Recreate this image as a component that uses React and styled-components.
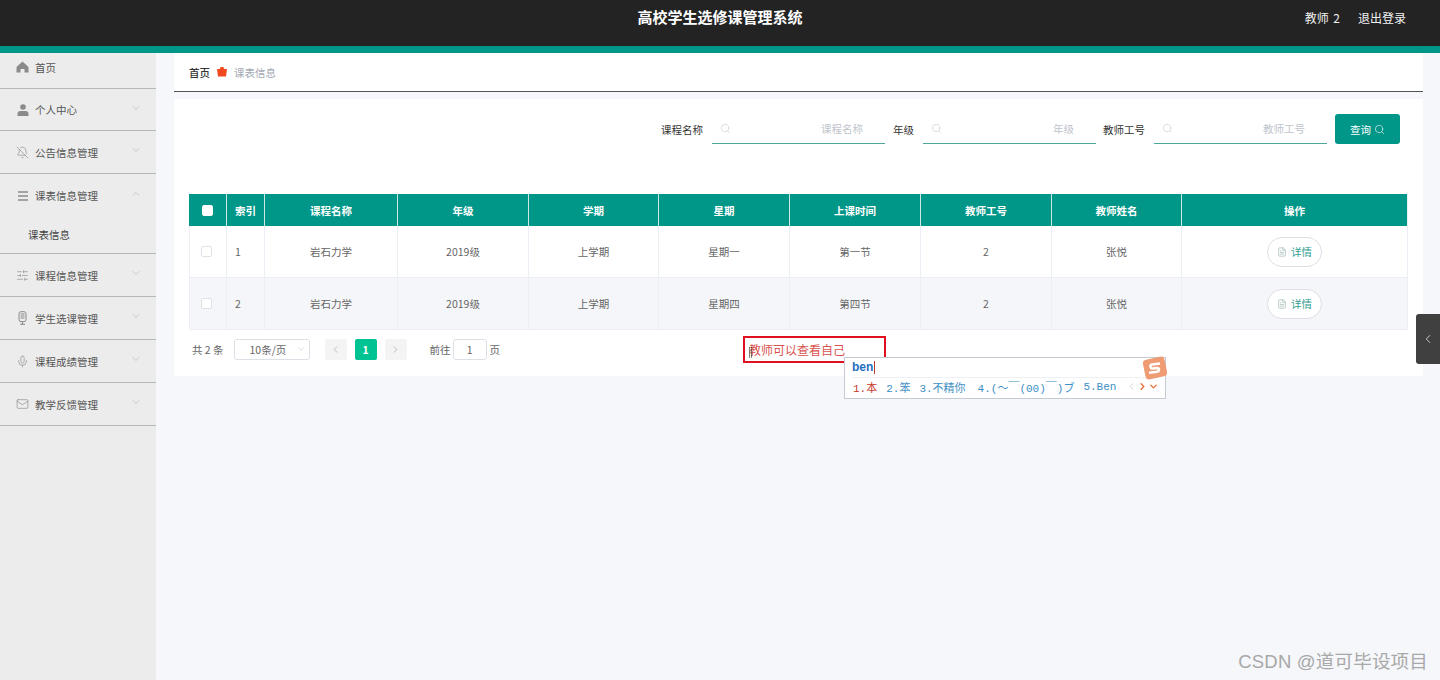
import React from "react";
import styled, { createGlobalStyle } from "styled-components";
import { ChevronDown, ChevronUp, ChevronLeft, ChevronRight, Search, BellOff, SlidersHorizontal, Mic, Mail, FileText } from "lucide-react";

const Global = createGlobalStyle`
  html, body { margin: 0; padding: 0; height: 100%; overflow: hidden; }
  body { font-family: "Noto Sans CJK SC", "Noto Sans", sans-serif; background: #f5f7fa; }
  * { box-sizing: border-box; }
`;
const Page = styled.div`position: relative; width: 1440px; height: 680px; display: flex; flex-direction: column; overflow: hidden;`;
const Header = styled.header`
  height: 53px; background: #232323; border-bottom: 7px solid #009688; flex: none;
  display: grid; grid-template-columns: 1fr auto 1fr; align-items: center; color: #fff; padding: 0 0 12px 0;
`;
const Title = styled.h1`grid-column: 2; margin: 0; font-size: 15px; font-weight: 700; color: #fff; line-height: 24px;`;
const HeaderRight = styled.div`grid-column: 3; justify-self: end; display: flex; gap: 18px; font-size: 12px; color: #f2f2f2; word-spacing: 2px; padding-right: 34px;`;
const Body = styled.div`display: flex; flex: 1; min-height: 0;`;
const Sidebar = styled.nav`width: 156px; flex: none; background: #ececec;`;
const MenuItem = styled.div`
  height: ${p => p.$h || 43}px; display: flex; align-items: center; padding: ${p => p.$top ? "0 14px 7px 16px" : "0 14px 0 16px"};
  border-bottom: ${p => p.$flat ? "none" : "1px solid #b4b8b6"}; font-size: 10.5px; color: #555; gap: 6px;
`;
const MenuIcon = styled.span`width: 13px; height: 13px; display: flex; align-items: center; justify-content: center; color: #8a8a8a; flex: none;`;
const MenuLabel = styled.span`flex: 1; white-space: nowrap;`;
const Arrow = styled.span`display: flex; color: #a3b5b0; margin-top: -4px;`;
const SubItem = styled.div`height: 37px; padding: 0 0 2px 28px; display: flex; align-items: center; font-size: 10.5px; color: #444; border-bottom: 1px solid #b4b8b6;`;
const Main = styled.main`flex: 1; padding: 0 17px 0 18px; min-width: 0;`;
const Crumbs = styled.div`
  height: 39px; background: #fff; border-bottom: 1px solid #555; display: flex; align-items: center;
  padding: 0 15px 0 15px; gap: 7px; font-size: 10.5px; color: #333; font-weight: 500;
`;
const CrumbLast = styled.span`color: #a3a8b3; font-weight: 400;`;
const Card = styled.section`margin-top: 7px; background: #fff; height: 277px; padding: 15px 16px 0 15px;`;
const Filters = styled.div`display: flex; justify-content: flex-end; align-items: center; height: 30px; padding-right: 7px; font-size: 10.5px; color: #333;`;
const FilterLabel = styled.span`margin-right: 9px; white-space: nowrap;`;
const Field = styled.div`
  width: 173px; height: 30px; border-bottom: 1px solid #4fa79b; display: flex; align-items: center; justify-content: space-between;
  padding: 0 22px 0 8px; color: #c0c4cc; font-size: 10.5px; margin-right: ${p => p.$mr}px;
`;
const SearchButton = styled.button`
  width: 65px; height: 30px; border: none; border-radius: 3px; background: #009688; color: #fff; font: inherit; font-size: 10.5px;
  display: flex; align-items: center; justify-content: center; gap: 3px; padding: 0;
`;
const Table = styled.div`margin-top: 50px; width: 1219px; border-right: 1px solid #ebeef5; border-bottom: 1px solid #ebeef5;`;
const Row = styled.div`
  display: grid; grid-template-columns: 38px 38px 133px 131px 130px 131px 131px 131px 130px 1fr; height: ${p => p.$h}px;
  background: ${p => p.$bg}; border-bottom: ${p => p.$line ? `1px solid ${p.$line}` : "none"};
`;
const HeadCell = styled.div`display: flex; align-items: center; justify-content: center; color: #fff; font-size: 10.5px; font-weight: 700; border-right: 1px solid #cfe6e2;
  &:last-child { border-right: none; }`;
const Cell = styled.div`display: flex; align-items: center; justify-content: ${p => p.$left ? "flex-start" : "center"}; padding-left: ${p => p.$left ? 8 : 0}px; color: #666; font-size: 10.5px; border-right: 1px solid #ebeef5;
  &:first-child { border-left: 1px solid #ebeef5; }
  &:last-child { border-right: none; }`;
const Check = styled.span`width: 11px; height: 11px; border-radius: 2px; display: block; background: #fff; border: 1px solid ${p => p.$head ? "#fff" : "#dfe2e8"}; margin-right: ${p => p.$head ? 0 : 3}px;`;
const DetailButton = styled.button`
  width: 55px; height: 30px; border-radius: 15px; border: 1px solid #dcdfe6; background: #fff; color: #2f9e90; font: inherit; font-size: 10.5px;
  display: flex; align-items: center; justify-content: center; gap: 4px; padding: 0;
`;
const Pager = styled.div`display: flex; align-items: center; height: 38px; padding-left: 3px; font-size: 10.5px; color: #666;`;
const SizeSelect = styled.div`
  width: 76px; height: 21px; margin-left: 10px; border: 1px solid #dcdfe6; border-radius: 3px; display: flex; align-items: center; justify-content: space-between;
  padding: 0 3px 0 15px; color: #666; font-size: 10.5px;
`;
const PageBtn = styled.div`
  width: 22px; height: 21px; margin-left: ${p => p.$ml}px; border-radius: 2px; display: flex; align-items: center; justify-content: center;
  background: ${p => p.$on ? "#00c292" : "#f4f4f5"}; color: ${p => p.$on ? "#fff" : "#b4b7bd"}; font-size: 10.5px; font-weight: 700;
`;
const JumpLabel = styled.span`margin-left: ${p => p.$ml}px;`;
const JumpInput = styled.div`width: 34px; height: 21px; margin: 0 3px 0 2px; border: 1px solid #dcdfe6; border-radius: 3px; display: flex; align-items: center; justify-content: center;`;
const Note = styled.div`
  position: absolute; left: 743px; top: 336px; width: 143px; height: 27px; border: 2px solid #e01020; color: #d9534f;
  font-size: 12px; display: flex; align-items: center; padding-left: 4px; white-space: nowrap; line-height: 1;
`;
const Caret = styled.span`position: absolute; left: 3px; top: 9px; width: 5px; height: 11px; border-left: 1px solid #333; border-right: 1px solid #333; transform: scaleX(.6);`;
const Ime = styled.div`
  position: absolute; left: 844px; top: 357px; width: 322px; height: 42px; background: #fff; border: 1px solid #c5cad3;
  display: flex; flex-direction: column; padding: 0 8px;
`;
const ImeInput = styled.div`height: 20px; display: flex; align-items: center; font: 700 12px "Liberation Sans", sans-serif; color: #1f6fc0; border-bottom: 1px solid #eef0f3; margin: 0 -1px; padding-bottom: 1px;`;
const ImeCursor = styled.span`width: 1px; height: 13px; background: #c0392b; margin-left: 1px;`;
const ImeList = styled.div`flex: 1; display: flex; align-items: center; padding-bottom: 2px; font: 11px "Liberation Mono", "Noto Sans CJK SC", monospace; color: #3d8fc4; white-space: nowrap;`;
const ImeOption = styled.span`margin-right: ${p => p.$mr}px; color: ${p => p.$first ? "#c8352b" : "#3d8fc4"};`;
const ImeArrows = styled.span`display: flex; position: absolute; right: 6px; top: 23px;`;
const ImeLogo = styled.svg`position: absolute; right: -2px; top: -2px;`;
const SideTab = styled.div`
  position: absolute; right: 0; top: 314px; width: 24px; height: 50px; background: #404040; border-radius: 3px 0 0 3px;
  display: flex; align-items: center; justify-content: center; color: #f0f0f0;
`;
const Watermark = styled.div`position: absolute; right: 12px; top: 647px; font: 18.5px "Liberation Sans", "Noto Sans CJK SC", sans-serif; letter-spacing: .2px; color: #a8a8a8; white-space: nowrap;`;

const HomeIcon = () => <svg width="13" height="12" viewBox="0 0 13 12"><path fill="currentColor" d="M6.5.5 12.5 6v5.5H8.5V8h-4v3.5H.5V6z" /></svg>;
const UserIcon = () => <svg width="12" height="12" viewBox="0 0 12 12"><circle cx="6" cy="3" r="2.8" fill="currentColor" /><path fill="currentColor" d="M.5 12V9.5C.5 7.8 2 7 3.5 7h5c1.5 0 3 .8 3 2.5V12z" /></svg>;
const ListIcon = () => <svg width="12" height="10" viewBox="0 0 12 10"><path stroke="currentColor" strokeWidth="1.3" d="M1 1h10M1 5h10M1 9h10" /></svg>;
const PhoneIcon = () => <svg width="9" height="14" viewBox="0 0 9 14" fill="none"><rect x="1" y=".7" width="7" height="10" rx="2" stroke="currentColor" /><path stroke="currentColor" d="M2.5 3h4M2.5 5h4M2.5 7h4M4.5 11v2M2 13.3h5" /></svg>;
const HouseMark = () => <svg width="10" height="10" viewBox="0 0 10 10"><path fill="#f1481f" d="M3.5 0h3l.5 2H10L9 9.5H1L0 2h3z" /></svg>;

const menus = [
  { label: "个人中心", icon: <UserIcon />, h: 42 },
  { label: "公告信息管理", icon: <BellOff size={13} strokeWidth={1.2} /> },
  { label: "课表信息管理", icon: <ListIcon />, open: true },
  { label: "课程信息管理", icon: <SlidersHorizontal size={13} strokeWidth={1.2} /> },
  { label: "学生选课管理", icon: <PhoneIcon /> },
  { label: "课程成绩管理", icon: <Mic size={13} strokeWidth={1.2} /> },
  { label: "教学反馈管理", icon: <Mail size={14} strokeWidth={1.2} /> },
];
const heads = ["索引", "课程名称", "年级", "学期", "星期", "上课时间", "教师工号", "教师姓名", "操作"];
const rows = [
  ["1", "岩石力学", "2019级", "上学期", "星期一", "第一节", "2", "张悦"],
  ["2", "岩石力学", "2019级", "上学期", "星期四", "第四节", "2", "张悦"],
];
const filters = [
  ["课程名称", 8],
  ["年级", 7],
  ["教师工号", 8],
];

export default function App() {
  return (
    <Page>
      <Global />
      <Header>
        <Title>高校学生选修课管理系统</Title>
        <HeaderRight><span>教师 2</span><span>退出登录</span></HeaderRight>
      </Header>
      <Body>
        <Sidebar>
          <MenuItem $h={36} $top><MenuIcon><HomeIcon /></MenuIcon><MenuLabel>首页</MenuLabel></MenuItem>
          {menus.map(m => (
            <React.Fragment key={m.label}>
              <MenuItem $flat={m.open} $h={m.h}>
                <MenuIcon>{m.icon}</MenuIcon>
                <MenuLabel>{m.label}</MenuLabel>
                <Arrow>{m.open ? <ChevronUp size={12} strokeWidth={1.2} /> : <ChevronDown size={12} strokeWidth={1.2} />}</Arrow>
              </MenuItem>
              {m.open && <SubItem>课表信息</SubItem>}
            </React.Fragment>
          ))}
        </Sidebar>
        <Main>
          <Crumbs><span>首页</span><HouseMark /><CrumbLast>课表信息</CrumbLast></Crumbs>
          <Card>
            <Filters>
              {filters.map(([label, mr]) => (
                <React.Fragment key={label}>
                  <FilterLabel>{label}</FilterLabel>
                  <Field $mr={mr}><Search size={11} strokeWidth={1.2} /><span>{label}</span></Field>
                </React.Fragment>
              ))}
              <SearchButton>查询<Search size={11} strokeWidth={1.3} /></SearchButton>
            </Filters>
            <Table>
              <Row $h={32} $bg="#009688">
                <HeadCell><Check $head /></HeadCell>
                {heads.map(h => <HeadCell key={h}>{h}</HeadCell>)}
              </Row>
              {rows.map((r, i) => (
                <Row key={i} $h={i % 2 ? 51 : 52} $bg={i % 2 ? "#f5f6f9" : "#fff"} $line={i % 2 ? null : "#ebeef5"}>
                  <Cell><Check /></Cell>
                  {r.map((c, j) => <Cell key={j} $left={j === 0}>{c}</Cell>)}
                  <Cell><DetailButton><FileText size={10} strokeWidth={1.2} color="#7a9c96" />详情</DetailButton></Cell>
                </Row>
              ))}
            </Table>
            <Pager>
              <span>共 2 条</span>
              <SizeSelect>10条/页<ChevronDown size={10} strokeWidth={1} color="#aaa" /></SizeSelect>
              <PageBtn $ml={15}><ChevronLeft size={11} /></PageBtn>
              <PageBtn $ml={8} $on>1</PageBtn>
              <PageBtn $ml={8}><ChevronRight size={11} /></PageBtn>
              <JumpLabel $ml={23}>前往</JumpLabel>
              <JumpInput>1</JumpInput>
              <span>页</span>
            </Pager>
          </Card>
        </Main>
      </Body>
      <Note><Caret />教师可以查看自己</Note>
      <Ime>
        <ImeInput>ben<ImeCursor /></ImeInput>
        <ImeList>
          <ImeOption $mr={9} $first>1.本</ImeOption>
          <ImeOption $mr={9}>2.笨</ImeOption>
          <ImeOption $mr={12}>3.不精你</ImeOption>
          <ImeOption $mr={9}>4.(～￣(00)￣)ブ</ImeOption>
          <ImeOption $mr={0}>5.Ben</ImeOption>
        </ImeList>
        <ImeArrows>
          <ChevronLeft size={11} color="#ccc" />
          <ChevronRight size={11} color="#e8703a" strokeWidth={3} />
          <ChevronDown size={11} color="#e8703a" strokeWidth={3} />
        </ImeArrows>
        <ImeLogo width="24" height="24" viewBox="0 0 24 24">
          <rect x="1" y="2" width="22" height="20" rx="4" fill="#ef9b73" transform="rotate(-12 12 12)" />
          <path d="M17 7.5 9 8.5q-2 .5-1.500 2.500t2.500 1.500l4-.5q2 0 2 1.700t-2 2l-8 1" fill="none" stroke="#fff" strokeWidth="2.500" />
        </ImeLogo>
      </Ime>
      <SideTab><ChevronLeft size={14} strokeWidth={1.3} /></SideTab>
      <Watermark>CSDN @道可毕设项目</Watermark>
    </Page>
  );
}
